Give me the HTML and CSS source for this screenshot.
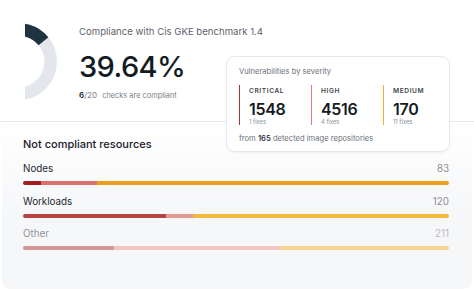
FILE: index.html
```html
<!DOCTYPE html>
<html lang="en">
  <head>
    <meta charset="UTF-8" />
    <title>Compliance</title>
    <link rel="stylesheet" href="styles.css">
  </head>
  <body>
    <div class="panel">
      <div class="summary">
        <svg class="donut" width="34" height="82" viewBox="25 21 34 82">
          <circle cx="18.5" cy="61.5" r="32.2" fill="none" stroke="#e3e6ea" stroke-width="12.6" />
          <path d="M -13.7 62 A 32.2 32.2 0 0 1 43.5 41.3" fill="none" stroke="#1f3340" stroke-width="12.6" />
        </svg>
        <div class="score">
          <div class="score-title">Compliance with Cis GKE benchmark 1.4</div>
          <div class="score-value">39.64%</div>
          <div class="score-sub"><b>6</b>/20 <span>checks are compliant</span></div>
        </div>

        <div class="vuln-card">
          <div class="vuln-title">Vulnerabilities by severity</div>
          <div class="vuln-cols">
            <div class="vuln-col critical">
              <div class="vuln-label">CRITICAL</div>
              <div class="vuln-num">1548</div>
              <div class="vuln-fix">1 fixes</div>
            </div>
            <div class="vuln-col high">
              <div class="vuln-label">HIGH</div>
              <div class="vuln-num">4516</div>
              <div class="vuln-fix">4 fixes</div>
            </div>
            <div class="vuln-col medium">
              <div class="vuln-label">MEDIUM</div>
              <div class="vuln-num">170</div>
              <div class="vuln-fix">11 fixes</div>
            </div>
          </div>
          <div class="vuln-foot">from <b>165</b> detected image repositories</div>
        </div>
      </div>

      <div class="resources">
        <div class="res-title">Not compliant resources</div>

        <div class="res-row">
          <div class="res-head"><span>Nodes</span><span class="res-count">83</span></div>
          <div class="bar">
            <div class="seg c1" style="width: 4.2%"></div>
            <div class="seg h1" style="width: 13.1%"></div>
            <div class="seg m1 fill"></div>
          </div>
        </div>

        <div class="res-row">
          <div class="res-head"><span>Workloads</span><span class="res-count">120</span></div>
          <div class="bar">
            <div class="seg c2" style="width: 33.6%"></div>
            <div class="seg h2" style="width: 6.3%"></div>
            <div class="seg m2 fill"></div>
          </div>
        </div>

        <div class="res-row faded">
          <div class="res-head"><span>Other</span><span class="res-count">211</span></div>
          <div class="bar">
            <div class="seg c3" style="width: 21.4%"></div>
            <div class="seg h3" style="width: 39.2%"></div>
            <div class="seg m3 fill"></div>
          </div>
        </div>
      </div>
    </div>
  </body>
</html>
```

FILE: styles.css
```css
* {
  margin: 0;
  padding: 0;
  box-sizing: border-box;
}
body {
  width: 474px;
  height: 292px;
  overflow: hidden;
  background-color: #ffffff;
  font-family: "Inter", "Noto Sans", sans-serif;
  color: #161d26;
}
.panel {
  width: 474px;
}
.summary {
  position: relative;
  display: flex;
  height: 122px;
  border-bottom: 1px solid #e7e9ec;
}
.donut {
  display: block;
  margin: 21px 0 0 25px;
}
.score {
  margin-left: 20px;
  padding-top: 26px;
}
.score-title {
  font-size: 9.6px;
  line-height: 12px;
  color: #5d636b;
}
.score-value {
  margin-top: 12px;
  font-size: 29px;
  line-height: 34px;
  font-weight: 500;
  letter-spacing: -0.6px;
  color: #141b24;
}
.score-sub {
  margin-top: 6px;
  font-size: 8px;
  line-height: 10px;
  color: #7a8088;
}
.score-sub b {
  font-weight: 600;
  color: #1f2630;
}
.score-sub span {
  margin-left: 3px;
  font-size: 7.4px;
}

/* severity card overlaps the divider */
.vuln-card {
  position: absolute;
  z-index: 2;
  left: 226px;
  top: 56px;
  width: 224px;
  height: 96px;
  padding: 10px 0 0 12px;
  border: 1px solid #e6e8eb;
  border-radius: 9px;
  background-color: #ffffff;
  box-shadow: 0 1px 3px rgba(0, 0, 0, 0.05);
}
.vuln-title {
  font-size: 7.6px;
  line-height: 10px;
  color: #6b7179;
}
.vuln-cols {
  display: flex;
  margin-top: 8px;
}
.vuln-col {
  flex: 0 0 72px;
  padding: 2px 0 0 9px;
  border-left: 1.6px solid;
}
.vuln-col.medium {
  flex: 1;
}
.vuln-col.critical {
  border-color: #a8323a;
}
.vuln-col.high {
  border-color: #e07d82;
}
.vuln-col.medium {
  border-color: #f0b12e;
}
.vuln-label {
  font-size: 6.6px;
  line-height: 8px;
  font-weight: 600;
  letter-spacing: 0.6px;
  color: #3f454c;
}
.vuln-num {
  margin-top: 5px;
  font-size: 16px;
  line-height: 18px;
  font-weight: 600;
  letter-spacing: -0.3px;
  color: #141b24;
}
.vuln-fix {
  font-size: 5.8px;
  line-height: 7px;
  color: #8a9098;
}
.vuln-foot {
  margin-top: 9px;
  font-size: 7.6px;
  line-height: 10px;
  color: #6b7179;
}
.vuln-foot b {
  font-weight: 600;
  color: #30363d;
}

.resources {
  margin: 0 2px;
  height: 167px;
  padding: 15px 23px 0 21px;
  border-radius: 0 0 8px 8px;
  background-image: linear-gradient(to bottom, #ffffff, #f6f7f9 55%, #f6f7f9);
}
.res-title {
  font-size: 11px;
  line-height: 14px;
  font-weight: 500;
  color: #1a2129;
}
.res-row {
  margin-top: 12.3px;
}
.res-row + .res-row {
  margin-top: 10.4px;
}
.res-head {
  display: flex;
  justify-content: space-between;
  font-size: 9.8px;
  line-height: 12px;
  color: #1f262e;
}
.res-count {
  color: #8b9097;
}
.faded .res-head {
  color: #8e939a;
}
.faded .res-count {
  color: #b9bcc1;
}
.bar {
  display: flex;
  height: 4px;
  margin-top: 6px;
  border-radius: 2px;
  overflow: hidden;
}
.seg {
  height: 100%;
}
.fill {
  flex: 1;
}
.c1 { background-color: #a31d1f; }
.h1 { background-color: #d8716f; }
.m1 { background-color: #e9a21a; }
.c2 { background-color: #b8423e; }
.h2 { background-color: #e19996; }
.m2 { background-color: #f1b93e; }
.c3 { background-color: #d4979a; }
.h3 { background-color: #f2c6c5; }
.m3 { background-color: #f7d593; }
```
